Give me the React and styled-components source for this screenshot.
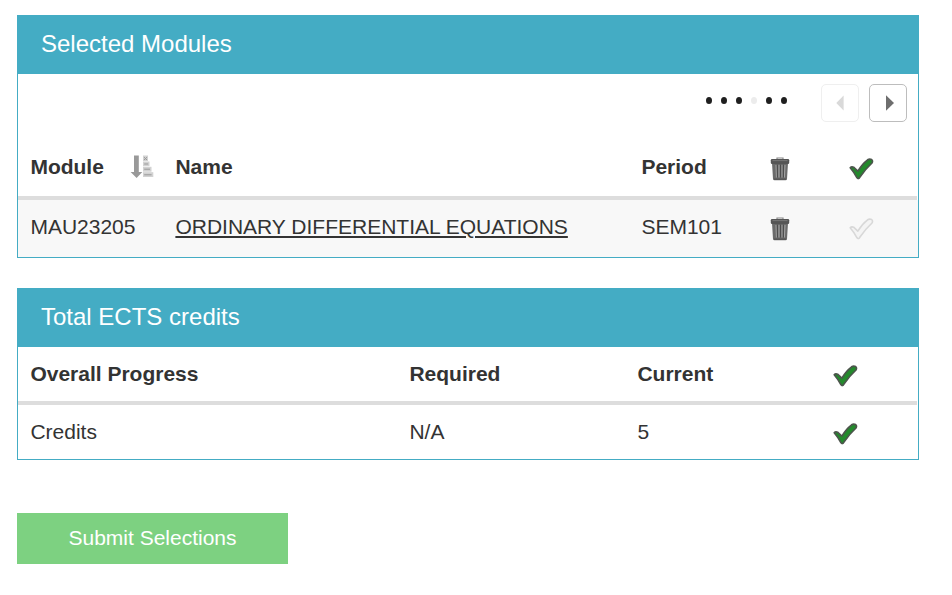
import React from 'react';
import styled, { createGlobalStyle } from 'styled-components';

const GlobalStyle = createGlobalStyle`
  * {
    box-sizing: border-box;
  }

  body {
    margin: 0;
    background-color: #fff;
    color: #333;
    font-family: "Liberation Sans", Arial, sans-serif;
    font-size: 21px;
  }
`;

const Page = styled.div`
  width: 952px;
  padding: 15px 33px 31px 17px;
`;

const Panel = styled.section`
  border: 1px solid #44acc4;
  margin-bottom: 30px;
`;

const PanelTitle = styled.h2`
  height: 58px;
  margin: 0;
  padding-left: 23px;
  background-color: #44acc4;
  color: #fff;
  font-size: 24px;
  font-weight: 400;
  line-height: 56px;
`;

const Toolbar = styled.div`
  display: flex;
  justify-content: flex-end;
  align-items: center;
  height: 58px;
  padding-right: 11px;
`;

const Dots = styled.div`
  display: flex;
  gap: 9px;
  margin: 0 34px 5px 0;
`;

const Dot = styled.span`
  width: 6px;
  height: 7px;
  border-radius: 50%;
  background-color: ${(props) => (props.$current ? '#ececec' : '#1f1f1f')};
`;

const PageButton = styled.button`
  display: flex;
  align-items: center;
  justify-content: center;
  width: 38px;
  height: 38px;
  margin-left: ${(props) => (props.disabled ? '0' : '10px')};
  padding: ${(props) => (props.disabled ? '0 1px 0 0' : '0 0 0 3px')};
  border: 1px solid ${(props) => (props.disabled ? '#efefef' : '#bdbdbd')};
  border-radius: 5px;
  background-color: #fff;
  color: ${(props) => (props.disabled ? '#d9d9d9' : '#6e6e6e')};

  svg {
    flex: none;
  }
`;

const Row = styled.div`
  display: grid;
  grid-template-columns: ${(props) => props.$columns};
  align-items: center;
  height: ${(props) => props.$height};
  padding: ${(props) => props.$pad || '0'};
  padding-left: 12.4px;
  background-color: ${(props) => (props.$shaded ? '#f8f8f8' : '#fff')};
`;

const HeadRow = styled(Row)`
  margin-right: 1px;
  border-bottom: 4px solid #ddd;
  font-weight: 700;
`;

const Cell = styled.div`
  display: flex;
  align-items: center;
  line-height: 24px;
  white-space: nowrap;
`;

const IconCell = styled(Cell)`
  padding: ${(props) => props.$drop || '3px'} 0 0 0.6px;

  svg {
    display: block;
  }
`;

const SortButton = styled.span`
  margin-left: 26px;
  line-height: 0;
`;

const ModuleLink = styled.a`
  color: #333;
  text-decoration: underline;
  text-decoration-thickness: 2px;
  text-underline-offset: 2px;
`;

const Submit = styled.button`
  display: block;
  width: 271px;
  height: 51px;
  margin-top: 53px;
  padding: 0 0 2px;
  border: none;
  background-color: #7dd181;
  color: #fff;
  font-family: inherit;
  font-size: 21px;
`;

const MODULE_COLUMNS = '145px 466px 128px 79px 1fr';
const CREDIT_COLUMNS = '379px 228px 195px 1fr';

const Arrow = ({ left }) => (
  <svg width="8" height="16" viewBox="0 0 8 16">
    <path d={left ? 'M7.6 0.6L0.3 8L7.6 15.4z' : 'M0 0.3L8 8L0 15.7z'} fill="currentColor" />
  </svg>
);

const SortIcon = () => (
  <svg width="24" height="24" viewBox="0 0 24 24">
    <path d="M4 0.5h4.8V17h3.5l-5.7 6-6-6H4z" fill="#999" />
    <g fill="#d2d2d2">
      <rect x="13" y="0.5" width="5" height="5.5" />
      <rect x="13" y="6.5" width="6.5" height="4.7" />
      <rect x="13" y="11.8" width="8.5" height="4.9" />
      <rect x="13" y="17.2" width="10.3" height="4.8" />
    </g>
    <path d="M14 2.2l3 2.8M17 2.2L14 5M14.2 9h4M14.2 14.2h5.8M14.2 19.8h7.4" stroke="#999" strokeWidth="1" fill="none" />
  </svg>
);

const TrashIcon = () => (
  <svg width="20" height="24" viewBox="0 0 20 24">
    <path d="M7 2.2V1h6v1.2" stroke="#888" strokeWidth="1.2" fill="none" />
    <path d="M2 6h16l-1 16q0 1.3-1.5 1.3H4.5q-1.4 0-1.5-1.3z" fill="#6b6b6b" />
    <rect x="0.8" y="2" width="18.4" height="5" rx="1.2" fill="#555" />
    <path d="M2.5 3.6h15" stroke="#777" />
    <path d="M6 8l.5 12.5M9 8v12.5M12 8v12.5M15 8l-.6 12.5" stroke="#a2a2a2" strokeWidth="1.1" />
    <path d="M7.4 7.5v13M10.5 7.5v13M13.4 7.5v13" stroke="#4c4c4c" strokeWidth="1.1" />
    <path d="M4 22.2h12" stroke="#555" strokeWidth="1.4" />
  </svg>
);

const CheckIcon = ({ faded }) => (
  <svg width="25" height="22" viewBox="0 0 25 22">
    <path
      d="M1.2 9.8Q2.5 8.2 4.6 9.2L8.8 13.2Q13 6 18.6 1.8Q20.5 0.6 22.6 1.5Q24.2 2.8 23 5Q16 11.5 10.8 19.3Q9.4 21.6 8 19.8Q5.4 14.8 1.2 9.8z"
      fill={faded ? '#f4f4f4' : '#238a2c'}
      stroke={faded ? '#d8d8d8' : '#4c554c'}
      strokeWidth="1.6"
      strokeLinejoin="round"
    />
  </svg>
);

const dots = [0, 1, 2, 3, 4, 5];

function App() {
  return (
    <Page>
      <GlobalStyle />
      <Panel>
        <PanelTitle>Selected Modules</PanelTitle>
        <Toolbar>
          <Dots>
            {dots.map((dot) => (
              <Dot key={dot} $current={dot === 3} />
            ))}
          </Dots>
          <PageButton disabled aria-label="Previous"><Arrow left /></PageButton>
          <PageButton aria-label="Next"><Arrow /></PageButton>
        </Toolbar>
        <HeadRow $columns={MODULE_COLUMNS} $height="68px" $pad="6px 0 0">
          <Cell>
            Module
            <SortButton><SortIcon /></SortButton>
          </Cell>
          <Cell>Name</Cell>
          <Cell>Period</Cell>
          <IconCell><TrashIcon /></IconCell>
          <IconCell><CheckIcon /></IconCell>
        </HeadRow>
        <Row $columns={MODULE_COLUMNS} $height="57px" $pad="0 0 4px" $shaded>
          <Cell>MAU23205</Cell>
          <Cell><ModuleLink href="#">ORDINARY DIFFERENTIAL EQUATIONS</ModuleLink></Cell>
          <Cell>SEM101</Cell>
          <IconCell $drop="5px"><TrashIcon /></IconCell>
          <IconCell $drop="5px"><CheckIcon faded /></IconCell>
        </Row>
      </Panel>
      <Panel>
        <PanelTitle>Total ECTS credits</PanelTitle>
        <HeadRow $columns={CREDIT_COLUMNS} $height="58px">
          <Cell>Overall Progress</Cell>
          <Cell>Required</Cell>
          <Cell>Current</Cell>
          <IconCell><CheckIcon /></IconCell>
        </HeadRow>
        <Row $columns={CREDIT_COLUMNS} $height="54px">
          <Cell>Credits</Cell>
          <Cell>N/A</Cell>
          <Cell>5</Cell>
          <IconCell><CheckIcon /></IconCell>
        </Row>
      </Panel>
      <Submit>Submit Selections</Submit>
    </Page>
  );
}

export default App;
